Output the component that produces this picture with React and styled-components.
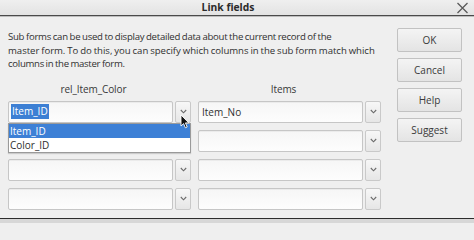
import React from "react";
import styled, { createGlobalStyle } from "styled-components";

const Global = createGlobalStyle`
  html, body { margin: 0; padding: 0; background: #efefef; }
  body { font-family: "Open Sans", "Noto Sans", sans-serif; }
`;

const Window = styled.div`
  width: 474px;
  height: 223px;
  display: flex;
  flex-direction: column;
  background: #efefef;
  overflow: hidden;
  position: relative;
  font-size: 10px;
  color: #2e2e2e;
`;

const TitleBar = styled.div`
  height: 15px;
  flex: 0 0 15px;
  background: linear-gradient(#efefef, #e3e3e3);
  border-bottom: 1px solid #4a4a4a;
  box-shadow: 0 1px 0 #bdbdbd;
  display: flex;
  align-items: center;
  justify-content: center;
  position: relative;
`;

const Title = styled.div`
  font-weight: 700;
  font-size: 10.3px;
  color: #2b2b2b;
  margin-right: 18px;
  margin-top: -1px;
`;

const Close = styled.div`
  position: absolute;
  right: 5px;
  top: 2px;
  width: 13px;
  height: 12px;
`;

const Body = styled.div`
  flex: 1;
  display: flex;
  padding: 12px 12px 0 8px;
  gap: 16px;
  min-height: 0;
`;

const Left = styled.div`
  width: 373px;
  display: flex;
  flex-direction: column;
  padding-top: 2px;
`;

const Desc = styled.div`
  line-height: 13.5px;
  color: #2f2f2f;
  font-size: 9.6px;
  white-space: nowrap;
`;

const DescLine = styled.div`
  letter-spacing: ${p => p.$ls}px;
  word-spacing: -0.5px;
`;

const Headers = styled.div`
  display: grid;
  grid-template-columns: 183px 183px;
  gap: 7px;
  margin-top: 11px;
  line-height: 14px;
`;

const Header = styled.div`
  text-align: center;
  padding-right: 12px;
  color: #383838;
  letter-spacing: -0.1px;
`;

const Rows = styled.div`
  display: grid;
  grid-template-columns: 183px 183px;
  column-gap: 7px;
  row-gap: 7px;
  margin-top: 5px;
`;

const Combo = styled.div`
  display: flex;
  gap: 2px;
  height: 22px;
  position: relative;
`;

const Field = styled.div`
  flex: 1;
  border: 1px solid #c6c6c6;
  border-radius: 2px;
  background: linear-gradient(#f6f6f6, #fdfdfd);
  box-shadow: inset 0 1px 0 #ebebeb;
  display: flex;
  align-items: center;
  padding-left: 2px;
  color: #303030;
`;

const Selected = styled.span`
  background: #3c7fd4;
  color: #fff;
  padding: 1px 1px;
  line-height: 13px;
`;

const Plain = styled.span`
  padding-left: 1px;
`;

const DropBtn = styled.div`
  width: 14px;
  border: 1px solid #c9c9c9;
  border-radius: 2px;
  background: linear-gradient(#f7f7f7, #e6e6e6);
  display: flex;
  align-items: center;
  justify-content: center;
`;

const List = styled.div`
  position: absolute;
  left: 0;
  top: 100%;
  width: 181px;
  z-index: 2;
  border: 1px solid #9a9a9a;
  background: #fff;
  display: flex;
  flex-direction: column;
  box-shadow: 0 1px 1px rgba(0,0,0,0.15);
`;

const ListItem = styled.div`
  height: 14px;
  line-height: 14px;
  padding-left: 1px;
  background: ${p => (p.$active ? "#3d80d6" : "#fff")};
  color: ${p => (p.$active ? "#fff" : "#2e2e2e")};
`;

const Right = styled.div`
  width: 65px;
  display: flex;
  flex-direction: column;
  gap: 6px;
`;

const Button = styled.div`
  height: 22px;
  border: 1px solid #c2c2c2;
  border-radius: 2px;
  background: linear-gradient(#f4f4f4, #e4e4e4);
  display: flex;
  align-items: center;
  justify-content: center;
  color: #3a3a3a;
`;

const Bottom = styled.div`
  height: 4px;
  flex: 0 0 4px;
  border-top: 1px solid #2c2c2c;
  background: #d7d7d7;
`;

const Cursor = styled.svg`
  position: absolute;
  left: 180px;
  top: 114px;
  z-index: 3;
`;

const Chevron = () => (
  <svg width="7" height="5" viewBox="0 0 7 5">
    <path d="M0.8 1 L3.5 3.8 L6.2 1" fill="none" stroke="#6a6a6a" strokeWidth="1.1" />
  </svg>
);

const ComboBox = ({ value, selected, children }) => (
  <Combo>
    <Field>{value ? (selected ? <Selected>{value}</Selected> : <Plain>{value}</Plain>) : null}</Field>
    <DropBtn><Chevron /></DropBtn>
    {children}
  </Combo>
);

export default function App() {
  const rows = [
    ["Item_ID", "Item_No"],
    ["", ""],
    ["", ""],
    ["", ""],
  ];
  return (
    <>
      <Global />
      <Window>
        <TitleBar>
          <Title>Link fields</Title>
          <Close>
            <svg width="13" height="12" viewBox="0 0 13 12">
              <path d="M1.5 1 L11.5 11 M11.5 1 L1.5 11" stroke="#5a5a5a" strokeWidth="1.3" />
            </svg>
          </Close>
        </TitleBar>
        <Body>
          <Left>
            <Desc>
              <DescLine $ls={-0.26}>Sub forms can be used to display detailed data about the current record of the</DescLine>
              <DescLine $ls={-0.04}>master form. To do this, you can specify which columns in the sub form match which</DescLine>
              <DescLine $ls={-0.3}>columns in the master form.</DescLine>
            </Desc>
            <Headers>
              <Header>rel_Item_Color</Header>
              <Header>Items</Header>
            </Headers>
            <Rows>
              {rows.map((r, i) => (
                <React.Fragment key={i}>
                  <ComboBox value={r[0]} selected={i === 0}>
                    {i === 0 && (
                      <List>
                        <ListItem $active>Item_ID</ListItem>
                        <ListItem>Color_ID</ListItem>
                      </List>
                    )}
                  </ComboBox>
                  <ComboBox value={r[1]} />
                </React.Fragment>
              ))}
            </Rows>
          </Left>
          <Right>
            <Button>OK</Button>
            <Button>Cancel</Button>
            <Button>Help</Button>
            <Button>Suggest</Button>
          </Right>
        </Body>
        <Bottom />
        <Cursor width="10" height="15" viewBox="0 0 10 15">
          <path d="M1 1 L1 12 L3.6 9.6 L5.4 13.8 L7.2 13 L5.4 8.9 L8.8 8.9 Z" fill="#111" stroke="#fff" strokeWidth="0.9" strokeLinejoin="round" />
        </Cursor>
      </Window>
    </>
  );
}
